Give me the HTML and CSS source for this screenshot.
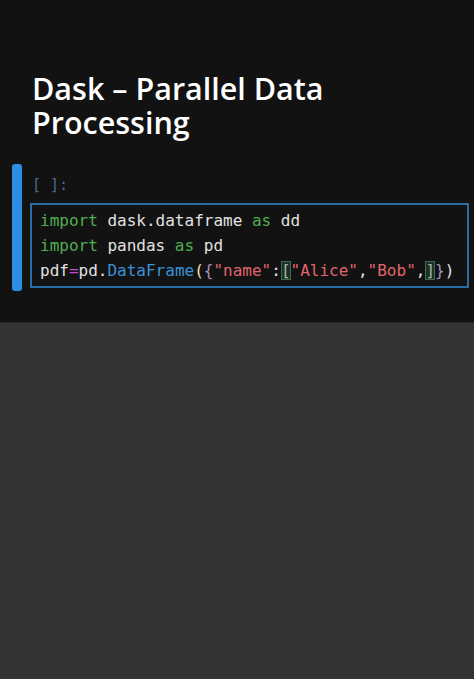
FILE: index.html
```html
<!DOCTYPE html>
<html>
<head>
<meta charset="utf-8">
<link rel="stylesheet" href="styles.css">
</head>
<body>
<div class="top">
  <h1 class="title">Dask – Parallel Data<br>Processing</h1>
  <div class="cell">
    <div class="bar"></div>
    <div class="cell-body">
      <div class="prompt">[ ]:</div>
      <div class="editor">
        <div class="line"><span class="kw">import</span> dask.dataframe <span class="kw">as</span> dd</div>
        <div class="line"><span class="kw">import</span> pandas <span class="kw">as</span> pd</div>
        <div class="line">pdf<span class="op">=</span>pd.<span class="cls">DataFrame</span><span class="paren">(</span><span class="brace">{</span><span class="str">"name"</span>:<span class="match">[</span><span class="str">"Alice"</span>,<span class="str">"Bob"</span>,<span class="cursor"></span><span class="match">]</span><span class="brace">}</span>)</div>
      </div>
    </div>
  </div>
</div>
<div class="bottom"></div>
</body>
</html>
```
FILE: styles.css
```css
html, body {
  margin: 0;
  padding: 0;
  background: #333333;
}
.top {
  background: #121212;
  height: 323px;
  padding-top: 71px;
  box-sizing: border-box;
  border-bottom: 1px solid #2a2a2a;
}
.title {
  margin: 0 0 25px 32px;
  font-family: "Open Sans", sans-serif;
  font-weight: 600;
  font-size: 30.5px;
  line-height: 34px;
  color: #ffffff;
}
.cell {
  display: flex;
  padding-left: 12px;
  padding-right: 5px;
}
.bar {
  width: 10px;
  height: 127px;
  background: #2d8fe4;
  border-radius: 3px;
  flex: none;
}
.cell-body {
  flex: 1;
  margin-left: 8px;
  padding-top: 12px;
}
.prompt {
  font-family: "DejaVu Sans Mono", monospace;
  font-size: 15px;
  line-height: 18px;
  color: #4a6a8e;
  padding-left: 2px;
  height: 27px;
}
.editor {
  border: 2px solid #2b6da3;
  padding: 3px 0 3px 8px;
  font-family: "DejaVu Sans Mono", monospace;
  font-size: 16px;
  line-height: 25px;
  color: #e2e2e2;
}
.line { white-space: pre; }
.kw { color: #4fae4f; }
.op { color: #c74ad0; }
.cls { color: #3b93d6; }
.paren { color: #f0e6b0; }
.brace { color: #a890b8; }
.str { color: #e0656b; }
.match {
  color: #9fb4a8;
  background: #1e2f26;
  outline: 1px solid #3c6b52;
  outline-offset: -1px;
}
.cursor {
  display: inline-block;
  width: 2px;
  height: 18px;
  background: #f0f0f0;
  vertical-align: -3px;
  margin-right: -2px;
}
.bottom {
  height: 356px;
  background: #333333;
}
```
